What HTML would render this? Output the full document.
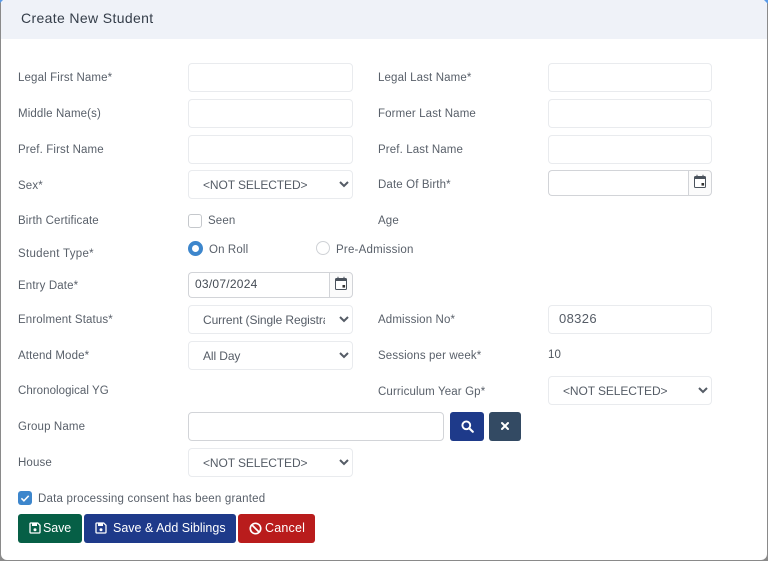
<!DOCTYPE html>
<html lang="en"><head><meta charset="utf-8"><title>Create New Student</title>
<style>
html,body{margin:0;padding:0;width:768px;height:561px;overflow:hidden;background:#8a8a8a}
body{position:relative;font-family:"Liberation Sans",sans-serif}
#m{position:absolute;left:1px;top:0;width:766px;height:560px;background:#fff;border-radius:0 0 6px 6px;overflow:hidden}
#h{position:absolute;left:0;top:0;width:766px;height:39px;background:#eff2f8}
#p{position:absolute;left:0;top:0;width:768px;height:561px}
.t{position:absolute;white-space:nowrap;line-height:14px}
.l{font-size:11.5px;color:#59606a;letter-spacing:.13px}
.i{position:absolute;box-sizing:border-box;background:#fff;border:1px solid #e9ebee;border-radius:4px;height:29px}
.d{border-color:#d2d4d8}
select{position:absolute;box-sizing:border-box;background:#fff;border:1px solid #e9ebee;border-radius:4px;height:29px;font-family:"Liberation Sans",sans-serif;font-size:12px;color:#555c66;padding:0 11px 0 10px;letter-spacing:-.1px;outline:0}
.cal{position:absolute;box-sizing:border-box;border:1px solid #d2d4d8;border-radius:0 4px 4px 0;background:#fbfbfb;height:26px;width:24px}
.b{position:absolute;box-sizing:border-box;height:29px;border-radius:3px;color:#fff;font-size:12.5px;line-height:29px;white-space:nowrap}
.b svg{position:absolute}
</style></head><body>
<div id="p">
<div id="m"><div id="h"></div></div>
<svg style="position:absolute;left:0;top:0" width="768" height="4"><path d="M0 0h3L0 3zM768 0h-4l4 4z" fill="#5b9be8"/></svg>

<div class="t" style="left:21px;top:10px;font-size:14px;line-height:16px;color:#343d49;letter-spacing:.36px">Create New Student</div>

<div class="t l" style="left:18px;top:71px">Legal First Name*</div>
<div class="t l" style="left:18px;top:107px">Middle Name(s)</div>
<div class="t l" style="left:18px;top:143px">Pref. First Name</div>
<div class="t l" style="left:18px;top:179px">Sex*</div>
<div class="t l" style="left:18px;top:214px">Birth Certificate</div>
<div class="t l" style="left:18px;top:247px;letter-spacing:.3px">Student Type*</div>
<div class="t l" style="left:18px;top:279px">Entry Date*</div>
<div class="t l" style="left:18px;top:313px">Enrolment Status*</div>
<div class="t l" style="left:18px;top:349px">Attend Mode*</div>
<div class="t l" style="left:18px;top:384px;letter-spacing:.05px">Chronological YG</div>
<div class="t l" style="left:18px;top:420px">Group Name</div>
<div class="t l" style="left:18px;top:456px">House</div>

<div class="t l" style="left:378px;top:71px">Legal Last Name*</div>
<div class="t l" style="left:378px;top:107px">Former Last Name</div>
<div class="t l" style="left:378px;top:143px">Pref. Last Name</div>
<div class="t l" style="left:378px;top:178px">Date Of Birth*</div>
<div class="t l" style="left:378px;top:214px">Age</div>
<div class="t l" style="left:378px;top:313px">Admission No*</div>
<div class="t l" style="left:378px;top:349px">Sessions per week*</div>
<div class="t l" style="left:378px;top:385px">Curriculum Year Gp*</div>
<div class="t l" style="left:548px;top:348px;color:#4f565f">10</div>

<div class="i" style="left:188px;top:63px;width:165px"></div>
<div class="i" style="left:188px;top:99px;width:165px"></div>
<div class="i" style="left:188px;top:135px;width:165px"></div>
<div class="i" style="left:548px;top:63px;width:164px"></div>
<div class="i" style="left:548px;top:99px;width:164px"></div>
<div class="i" style="left:548px;top:135px;width:164px"></div>

<select style="left:188px;top:170px;width:165px"><option>&lt;NOT SELECTED&gt;</option></select>
<select style="left:188px;top:305px;width:165px"><option>Current (Single Registration)</option></select>
<select style="left:188px;top:341px;width:165px"><option>All Day</option></select>
<select style="left:188px;top:448px;width:165px"><option>&lt;NOT SELECTED&gt;</option></select>
<select style="left:548px;top:376px;width:164px"><option>&lt;NOT SELECTED&gt;</option></select>

<!-- Date of birth -->
<div class="i d" style="left:548px;top:170px;width:141px;height:26px;border-radius:4px 0 0 4px;border-right:0"></div>
<div class="cal" style="left:688px;top:170px"><svg style="position:absolute;left:4px;top:3px" width="14" height="15" viewBox="0 0 14 15"><rect x="1.5" y="2.5" width="11" height="11" rx="1" fill="#fff" stroke="#4a525c" stroke-width="1"/><rect x="1.5" y="2.5" width="11" height="2.5" fill="#4a525c"/><path d="M4 .8v2.2M10 .8v2.2" stroke="#4a525c" stroke-width="1"/><rect x="8.5" y="9" width="2.6" height="2.6" fill="#333"/></svg></div>

<!-- Entry date -->
<div class="i d" style="left:188px;top:272px;width:142px;height:26px;border-radius:4px 0 0 4px;border-right:0"></div>
<div class="t" style="left:195px;top:277px;font-size:12px;color:#454c55;letter-spacing:.25px">03/07/2024</div>
<div class="cal" style="left:329px;top:272px"><svg style="position:absolute;left:4px;top:3px" width="14" height="15" viewBox="0 0 14 15"><rect x="1.5" y="2.5" width="11" height="11" rx="1" fill="#fff" stroke="#4a525c" stroke-width="1"/><rect x="1.5" y="2.5" width="11" height="2.5" fill="#4a525c"/><path d="M4 .8v2.2M10 .8v2.2" stroke="#4a525c" stroke-width="1"/><rect x="8.5" y="9" width="2.6" height="2.6" fill="#333"/></svg></div>

<!-- Admission No -->
<div class="i" style="left:548px;top:305px;width:164px"></div>
<div class="t" style="left:559px;top:312px;font-size:13px;color:#555c66;letter-spacing:.35px">08326</div>

<!-- Seen checkbox -->
<div style="position:absolute;left:188px;top:214px;width:14px;height:14px;box-sizing:border-box;border:1px solid #c5c8cc;border-radius:3px;background:#fff"></div>
<div class="t l" style="left:208px;top:214px">Seen</div>

<!-- Radios -->
<div style="position:absolute;left:188px;top:241px;width:15px;height:15px;box-sizing:border-box;border:4px solid #3d86cc;border-radius:50%;background:#fff"></div>
<div class="t l" style="left:209px;top:243px">On Roll</div>
<div style="position:absolute;left:316px;top:241px;width:14px;height:14px;box-sizing:border-box;border:1px solid #cfd2d6;border-radius:50%;background:#fff"></div>
<div class="t l" style="left:336px;top:243px;letter-spacing:.22px">Pre-Admission</div>

<!-- Group name -->
<div class="i d" style="left:188px;top:412px;width:256px"></div>
<div class="b" style="left:450px;top:412px;width:34px;background:#1e3a8a"><svg style="left:11px;top:8px" width="13" height="13" viewBox="0 0 13 13"><circle cx="5.3" cy="5.3" r="3.9" fill="none" stroke="#fff" stroke-width="1.9"/><path d="M8.2 8.2l3.6 3.6" stroke="#fff" stroke-width="2.1" stroke-linecap="round"/></svg></div>
<div class="b" style="left:489px;top:412px;width:32px;background:#334a63"><svg style="left:11px;top:9px" width="10" height="10" viewBox="0 0 10 10"><path d="M2 2l6 6M8 2l-6 6" stroke="#fff" stroke-width="2" stroke-linecap="round"/></svg></div>

<!-- Consent -->
<div style="position:absolute;left:18px;top:491px;width:14px;height:14px;border-radius:3px;background:#3d86cc"><svg style="position:absolute;left:0;top:0" width="14" height="14" viewBox="0 0 14 14"><path d="M3.4 7.3l2.5 2.5 4.8-5" fill="none" stroke="#fff" stroke-width="1.5"/></svg></div>
<div class="t l" style="left:38px;top:492px;letter-spacing:.2px">Data processing consent has been granted</div>

<!-- Buttons -->
<div class="b" style="left:18px;top:514px;width:64px;background:#065f46"><svg style="left:11px;top:8px" width="12" height="12" viewBox="0 0 12 12"><path d="M1.7 1h7l2.3 2.3v7a.7.7 0 0 1-.7.7H1.7a.7.7 0 0 1-.7-.7V1.7a.7.7 0 0 1 .7-.7z" fill="none" stroke="#fff" stroke-width="1.3"/><path d="M3 1.5h5v2.5H3z" fill="#fff"/><circle cx="6" cy="7.7" r="1.5" fill="#fff"/></svg><span style="position:absolute;left:25px;letter-spacing:-.1px">Save</span></div>
<div class="b" style="left:84px;top:514px;width:152px;background:#1e3a8a"><svg style="left:11px;top:8px" width="12" height="12" viewBox="0 0 12 12"><path d="M1.7 1h7l2.3 2.3v7a.7.7 0 0 1-.7.7H1.7a.7.7 0 0 1-.7-.7V1.7a.7.7 0 0 1 .7-.7z" fill="none" stroke="#fff" stroke-width="1.3"/><path d="M3 1.5h5v2.5H3z" fill="#fff"/><circle cx="6" cy="7.7" r="1.5" fill="#fff"/></svg><span style="position:absolute;left:29px">Save &amp; Add Siblings</span></div>
<div class="b" style="left:238px;top:514px;width:77px;background:#b91c1c"><svg style="left:11px;top:8px" width="13" height="13" viewBox="0 0 13 13"><circle cx="6.5" cy="6.5" r="5.2" fill="none" stroke="#fff" stroke-width="1.7"/><path d="M2.9 2.9l7.2 7.2" stroke="#fff" stroke-width="1.7"/></svg><span style="position:absolute;left:27px;letter-spacing:.2px">Cancel</span></div>
</div>
</body></html>
